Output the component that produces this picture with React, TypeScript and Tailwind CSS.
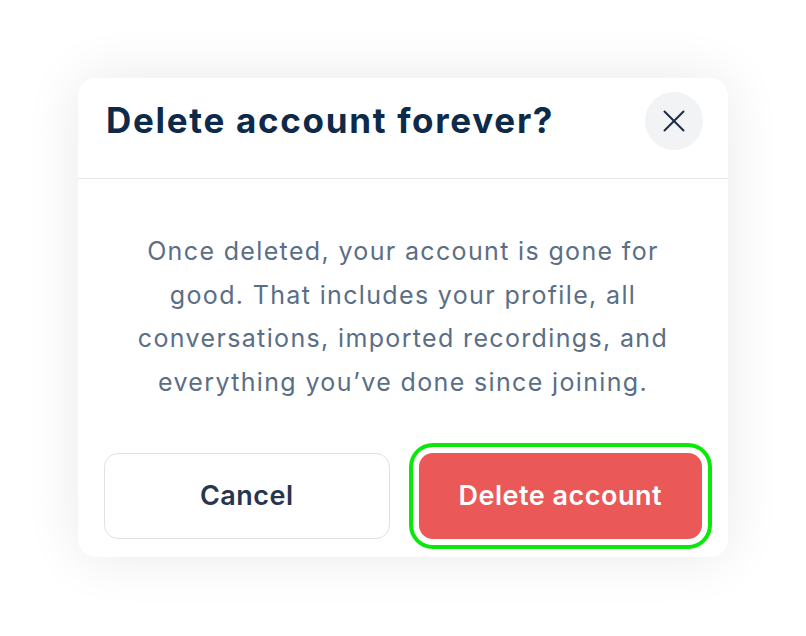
import { X } from "lucide-react";

export default function App() {
  return (
    <div
      className="flex h-[636px] w-[806px] items-start justify-center bg-white pt-[78px]"
      style={{ fontFamily: "Inter, 'Noto Sans', sans-serif" }}
    >
      <div className="w-[650px] rounded-[18px] bg-white shadow-[0_0_55px_rgba(0,0,0,0.09)]">
        <div className="flex h-[101px] items-center justify-between border-b border-[#e3e5e8] pb-[15px] pl-[28px] pr-[25px]">
          <h2 className="text-[35px] font-bold tracking-[1.7px] text-[#0d2a4b]">
            Delete account forever?
          </h2>
          <button className="flex h-[58px] w-[58px] items-center justify-center rounded-full bg-[#f1f3f5] text-[#1c2d48]">
            <X className="h-[38px] w-[38px]" strokeWidth={1.25} />
          </button>
        </div>

        <div className="px-[26px] pb-[18px] pt-[51px]">
          <p className="text-center text-[25px] leading-[43.5px] tracking-[1.35px] text-[#5a6e86]">
            Once deleted, your account is gone for
            <br />
            good. That includes your profile, all
            <br />
            conversations, imported recordings, and
            <br />
            everything you’ve done since joining.
          </p>

          <div className="mt-[49px] flex gap-[29px]">
            <button className="h-[86px] flex-1 rounded-[14px] border border-[#dfe1e5] bg-white text-[27px] font-semibold tracking-[0.5px] text-[#27354f]">
              Cancel
            </button>
            <button className="h-[86px] flex-1 rounded-[14px] bg-[#eb5858] text-[27px] font-semibold tracking-[0.5px] text-white ring-4 ring-[#0ae80a] ring-offset-[6px] ring-offset-white">
              Delete account
            </button>
          </div>
        </div>
      </div>
    </div>
  );
}
